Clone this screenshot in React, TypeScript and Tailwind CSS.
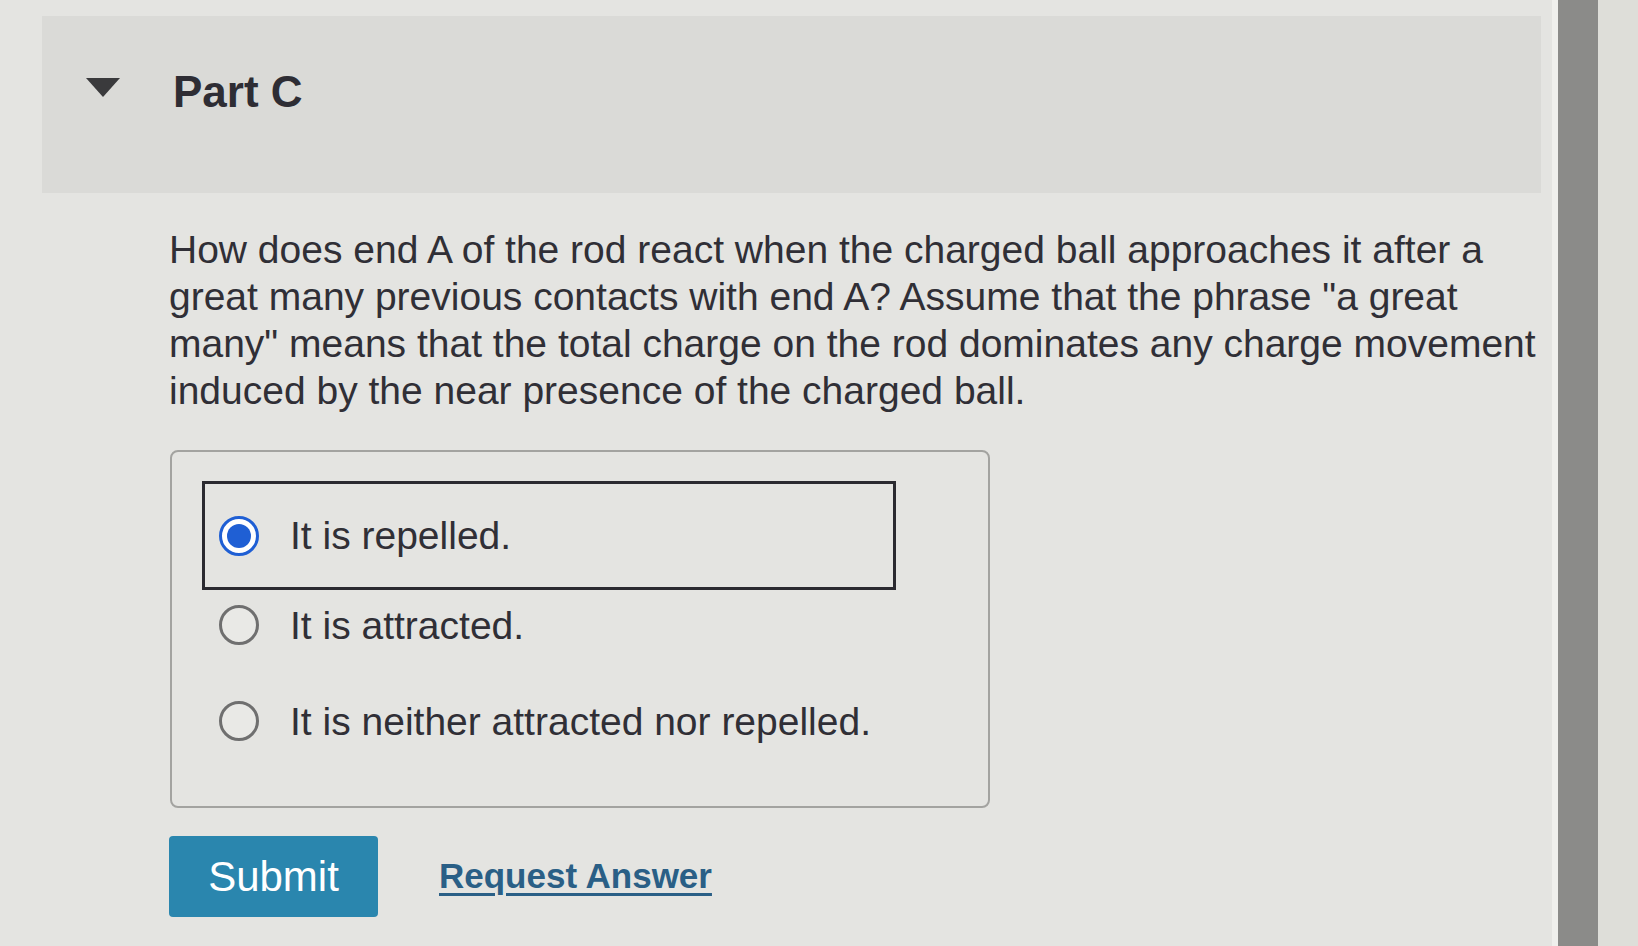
import React from "react";

const font = { fontFamily: '"Liberation Sans", Arial, Helvetica, sans-serif' };

function Radio({ checked }: { checked: boolean }) {
  if (checked) {
    return (
      <div className="w-[40px] h-[40px] rounded-full border-[3px] border-[#1f5fd4] bg-white flex items-center justify-center shrink-0">
        <div className="w-[24px] h-[24px] rounded-full bg-[#1f5fd4]" />
      </div>
    );
  }
  return <div className="w-[40px] h-[40px] rounded-full border-[3px] border-[#6f6f6f] bg-[#e9e9e6] shrink-0" />;
}

function Option({ label, checked, className }: { label: string; checked: boolean; className: string }) {
  return (
    <div
      className={`flex items-center pl-[14px] w-[694px] border-[3px] ${
        checked ? "border-[#2b2a30]" : "border-transparent"
      } ${className}`}
    >
      <Radio checked={checked} />
      <span className="ml-[31px] text-[39px] leading-[47px] text-[#302f36]">{label}</span>
    </div>
  );
}

export default function App() {
  return (
    <div className="w-[1638px] h-[946px] overflow-hidden bg-[#e4e4e1] flex" style={font}>
      <div className="w-[1552px] shrink-0 h-full pt-[16px]">
        <div className="ml-[42px] w-[1499px] h-[177px] bg-[#dadad7] flex items-start pt-[62px]">
          <svg className="ml-[44px]" width="34" height="19" viewBox="0 0 34 19">
            <polygon points="0,0 34,0 17,19" fill="#3a3a3c" />
          </svg>
          <div className="ml-[53px] -mt-[12px] text-[44px] leading-[52px] font-bold text-[#2e2d34]">Part C</div>
        </div>
        <div className="pl-[169px]">
          <p className="mt-[33px] w-[1380px] text-[39px] leading-[47px] text-[#302f36]">
            How does end A of the rod react when the charged ball approaches it after a great many previous contacts
            with end A? Assume that the phrase "a great many" means that the total charge on the rod dominates any
            charge movement induced by the near presence of the charged ball.
          </p>
          <div className="mt-[36px] ml-[1px] w-[820px] h-[358px] border-2 border-[#a3a3a0] rounded-lg pt-[29px] pl-[30px] flex flex-col">
            <Option label="It is repelled." checked={true} className="h-[109px]" />
            <Option label="It is attracted." checked={false} className="h-[70px]" />
            <Option label="It is neither attracted nor repelled." checked={false} className="h-[70px] mt-[26px]" />
          </div>
          <div className="mt-[28px] flex items-center">
            <button className="w-[209px] h-[81px] rounded-[4px] bg-[#2a86ae] text-white text-[42px] leading-none flex items-center justify-center">
              Submit
            </button>
            <a className="ml-[61px] text-[35px] font-bold text-[#2a5f86] underline underline-offset-[5px] decoration-[3px]">
              Request Answer
            </a>
          </div>
        </div>
      </div>
      <div className="w-[6px] shrink-0 h-full bg-[#efefec]" />
      <div className="w-[40px] shrink-0 h-full bg-[#8b8b89]" />
      <div className="flex-1 h-full bg-[#deded9]" />
    </div>
  );
}
